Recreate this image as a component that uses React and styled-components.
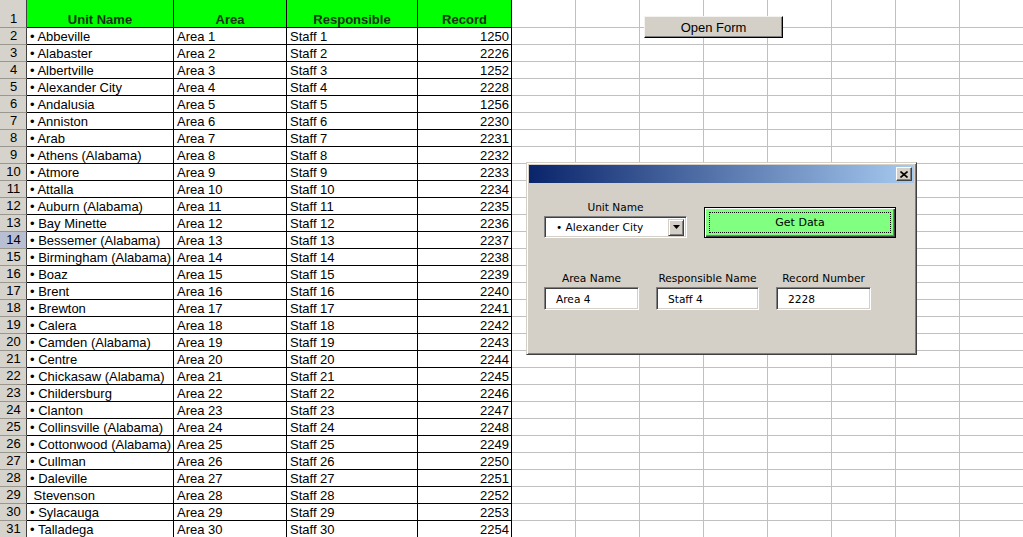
import React from 'react'
import styled, { createGlobalStyle } from 'styled-components'

const GlobalStyle = createGlobalStyle`
  html, body {
    margin: 0;
    padding: 0;
    background: #fff;
    overflow: hidden;
  }
  * { box-sizing: border-box; }
`

const Screen = styled.div`
  position: relative;
  width: 1023px;
  height: 537px;
  overflow: hidden;
  font-family: "Liberation Sans", Arial, sans-serif;
  font-size: 13px;
  color: #000;
`

const Sheet = styled.div`
  display: grid;
  grid-template-columns: 27px 147px 113px 131px 94px repeat(8, 64px);
  grid-template-rows: 28px;
  grid-auto-rows: 17px;
`

const RowHead = styled.div`
  background: ${(p) => (p.$active ? '#b9bfd3' : '#d6d3cc')};
  border-right: 1px solid #404040;
  border-bottom: 1px solid #9a978f;
  display: flex;
  align-items: flex-end;
  justify-content: center;
  padding-left: 1px;
  line-height: 16px;
  overflow: hidden;
`

const HeadCell = styled.div`
  background: #00ff00;
  color: #143214;
  font-weight: bold;
  border-right: 1px solid #000;
  border-bottom: 1px solid #000;
  display: flex;
  align-items: flex-end;
  justify-content: center;
  line-height: 15px;
`

const Cell = styled.div`
  border-right: 1px solid #000;
  border-bottom: 1px solid #000;
  line-height: 18px;
  padding: 0 2px 0 3px;
  white-space: nowrap;
  overflow: hidden;
  text-align: ${(p) => p.$align || 'left'};
`

const Blank = styled.div`
  border-right: 1px solid #c0c0c0;
  border-bottom: 1px solid #c0c0c0;
`

const SheetButton = styled.button`
  position: absolute;
  left: 644px;
  top: 16px;
  width: 139px;
  height: 22px;
  background: #d4d0c8;
  border: 1px solid;
  border-color: #f4f3f0 #000 #000 #f4f3f0;
  box-shadow: inset -1px -1px 0 #808080;
  font-family: "Liberation Sans", Arial, sans-serif;
  font-size: 13px;
  color: #000;
  padding: 0;
`

const Dialog = styled.div`
  position: absolute;
  left: 526px;
  top: 162px;
  width: 391px;
  height: 193px;
  background: #d4d0c8;
  border: 1px solid;
  border-color: #d4d0c8 #404040 #404040 #d4d0c8;
  box-shadow: inset 1px 1px 0 #fff, inset -1px -1px 0 #808080;
  padding: 2px;
  font-family: "DejaVu Sans", Tahoma, sans-serif;
  font-size: 10.6px;
  color: #000;
  display: flex;
  flex-direction: column;
`

const TitleBar = styled.div`
  height: 18px;
  background: linear-gradient(to right, #0a246a, #a6caf0);
  display: flex;
  align-items: center;
  justify-content: flex-end;
  padding-right: 2px;
`

const CloseButton = styled.div`
  width: 16px;
  height: 14px;
  background: #d4d0c8;
  border: 1px solid;
  border-color: #fff #404040 #404040 #fff;
  box-shadow: inset -1px -1px 0 #808080;
  display: flex;
  align-items: center;
  justify-content: center;
`

const Body = styled.div`
  display: flex;
  flex-direction: column;
  gap: 34px;
  padding: 18px 0 0 15px;
`

const Row = styled.div`
  display: flex;
  align-items: flex-end;
  gap: 17px;
`

const Field = styled.div`
  display: flex;
  flex-direction: column;
  align-items: center;
  gap: 2px;
`

const Label = styled.div`
  line-height: 13px;
  white-space: nowrap;
`

const Sunken = styled.div`
  width: ${(p) => p.$w}px;
  height: ${(p) => p.$h}px;
  background: #fff;
  border: 1px solid;
  border-color: #808080 #fff #fff #808080;
  box-shadow: inset 1px 1px 0 #404040, inset -1px -1px 0 #d4d0c8;
  display: flex;
  align-items: center;
  padding-left: 11px;
  white-space: nowrap;
`

const Combo = styled(Sunken)`
  padding-right: 2px;
  justify-content: space-between;
`

const DropButton = styled.div`
  width: 16px;
  height: 17px;
  background: #d4d0c8;
  border: 1px solid;
  border-color: #d4d0c8 #404040 #404040 #d4d0c8;
  box-shadow: inset 1px 1px 0 #fff, inset -1px -1px 0 #808080;
  display: flex;
  align-items: center;
  justify-content: center;
`

const GetButton = styled.button`
  position: relative;
  width: 192px;
  height: 31px;
  background: #80ff80;
  border: 1px solid #000;
  box-shadow: inset 1px 1px 0 #fff, inset -1px -1px 0 #404040, inset -2px -2px 0 #808080;
  font-family: "DejaVu Sans", Tahoma, sans-serif;
  font-size: 11px;
  color: #000;
  padding: 0;

  &::after {
    content: '';
    position: absolute;
    inset: 4px;
    border: 1px dotted #000;
  }
`

const units = [
  'Abbeville', 'Alabaster', 'Albertville', 'Alexander City', 'Andalusia', 'Anniston',
  'Arab', 'Athens (Alabama)', 'Atmore', 'Attalla', 'Auburn (Alabama)', 'Bay Minette',
  'Bessemer (Alabama)', 'Birmingham (Alabama)', 'Boaz', 'Brent', 'Brewton', 'Calera',
  'Camden (Alabama)', 'Centre', 'Chickasaw (Alabama)', 'Childersburg', 'Clanton',
  'Collinsville (Alabama)', 'Cottonwood (Alabama)', 'Cullman', 'Daleville', 'Stevenson',
  'Sylacauga', 'Talladega',
]

const early = { 1: 1250, 3: 1252, 5: 1256 }
const rows = units.map((name, i) => {
  const k = i + 1
  return {
    name: name === 'Stevenson' ? '\u00a0Stevenson' : '• ' + name,
    area: 'Area ' + k,
    staff: 'Staff ' + k,
    record: early[k] || 2224 + k,
  }
})

const blanks = (key) =>
  Array.from({ length: 8 }, (_, j) => <Blank key={key + '-' + j} />)

const App = () => {
  return (
    <Screen>
      <GlobalStyle />
      <Sheet>
        <RowHead>1</RowHead>
        <HeadCell>Unit Name</HeadCell>
        <HeadCell>Area</HeadCell>
        <HeadCell>Responsible</HeadCell>
        <HeadCell>Record</HeadCell>
        {blanks('h')}
        {rows.map((r, i) => (
          <React.Fragment key={i}>
            <RowHead $active={i + 2 === 14}>{i + 2}</RowHead>
            <Cell>{r.name}</Cell>
            <Cell>{r.area}</Cell>
            <Cell>{r.staff}</Cell>
            <Cell $align="right">{r.record}</Cell>
            {blanks('r' + i)}
          </React.Fragment>
        ))}
      </Sheet>

      <SheetButton>Open Form</SheetButton>

      <Dialog>
        <TitleBar>
          <CloseButton>
            <svg width="8" height="7" viewBox="0 0 8 7">
              <path d="M0.5 0.5 L7.5 6.5 M7.5 0.5 L0.5 6.5" stroke="#000" strokeWidth="1.6" fill="none" />
            </svg>
          </CloseButton>
        </TitleBar>
        <Body>
          <Row>
            <Field>
              <Label>Unit Name</Label>
              <Combo $w={143} $h={22}>
                <span>• Alexander City</span>
                <DropButton>
                  <svg width="7" height="4" viewBox="0 0 7 4">
                    <path d="M0 0 H7 L3.5 4 Z" fill="#000" />
                  </svg>
                </DropButton>
              </Combo>
            </Field>
            <GetButton>Get Data</GetButton>
          </Row>
          <Row>
            <Field>
              <Label>Area Name</Label>
              <Sunken $w={95} $h={23}>Area 4</Sunken>
            </Field>
            <Field>
              <Label>Responsible Name</Label>
              <Sunken $w={103} $h={23}>Staff 4</Sunken>
            </Field>
            <Field>
              <Label>Record Number</Label>
              <Sunken $w={95} $h={23}>2228</Sunken>
            </Field>
          </Row>
        </Body>
      </Dialog>
    </Screen>
  )
}

export default App
